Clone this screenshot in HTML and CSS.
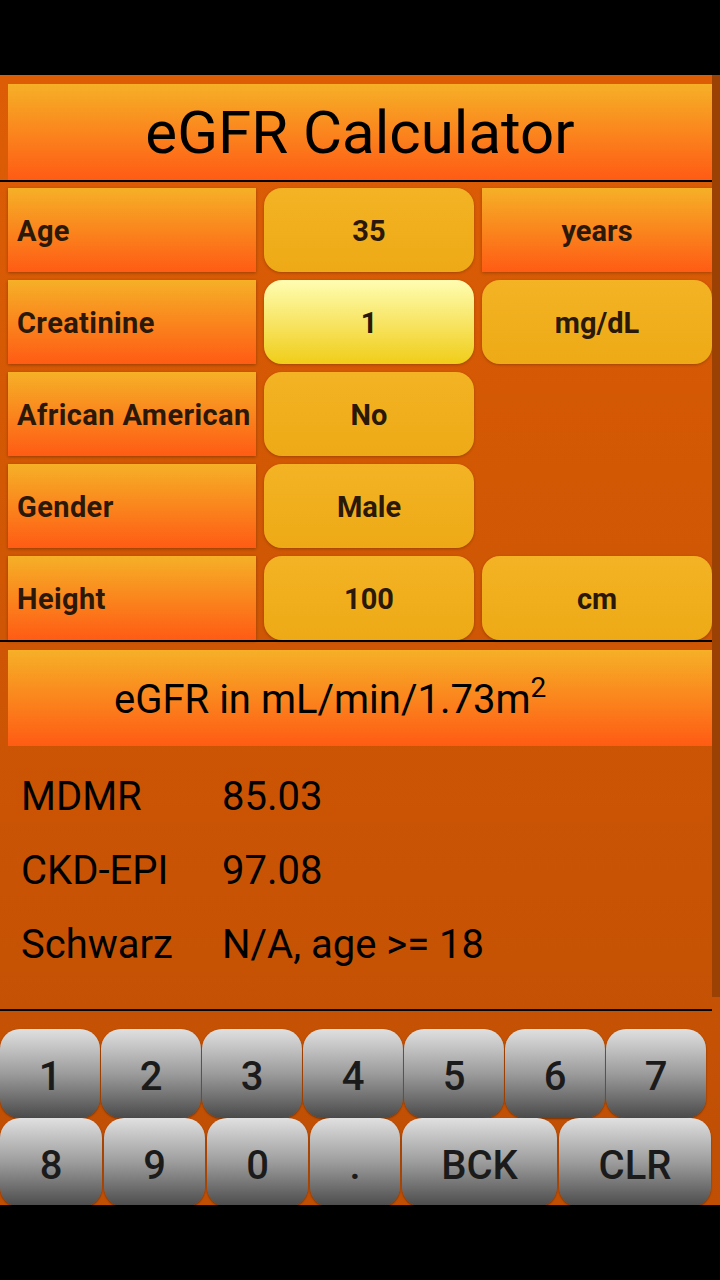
FILE: index.html
```html
<!DOCTYPE html>
<html lang="en">
<head>
  <meta charset="UTF-8" />
  <title>eGFR Calculator</title>
  <link rel="stylesheet" href="styles.css">
</head>
<body>

<div class="status-bar"></div>

<div class="app">
  <div class="scrollbar"></div>

  <div class="title">eGFR Calculator</div>
  <div class="divider"></div>

  <!-- inputs -->
  <div class="inputs">
    <div class="label">Age</div>
    <div class="value">35</div>
    <div class="unit flat">years</div>

    <div class="label">Creatinine</div>
    <div class="value active">1</div>
    <div class="unit">mg/dL</div>

    <div class="label">African American</div>
    <div class="value">No</div>
    <div></div>

    <div class="label">Gender</div>
    <div class="value">Male</div>
    <div></div>

    <div class="label">Height</div>
    <div class="value">100</div>
    <div class="unit">cm</div>
  </div>
  <div class="divider"></div>

  <!-- results -->
  <div class="results-head">eGFR in mL/min/1.73m<sup>2</sup></div>
  <div class="results">
    <div class="res-name">MDMR</div><div>85.03</div>
    <div class="res-name">CKD-EPI</div><div>97.08</div>
    <div class="res-name">Schwarz</div><div>N/A, age &gt;= 18</div>
  </div>
  <div class="divider low"></div>

  <!-- keypad -->
  <div class="keys row1">
    <button class="key">1</button>
    <button class="key">2</button>
    <button class="key">3</button>
    <button class="key">4</button>
    <button class="key">5</button>
    <button class="key">6</button>
    <button class="key">7</button>
  </div>
  <div class="keys row2">
    <button class="key">8</button>
    <button class="key">9</button>
    <button class="key">0</button>
    <button class="key">.</button>
    <button class="key">BCK</button>
    <button class="key">CLR</button>
  </div>
</div>

</body>
</html>
```

FILE: styles.css
```css
body {
  margin: 0;
  background: #000;
  font-family: Roboto, "Noto Sans", sans-serif;
  width: 720px;
  height: 1280px;
  overflow: hidden;
}
.status-bar {
  height: 75px;
}
.app {
  position: relative;
  height: 1130px;
  padding-top: 9px;
  box-sizing: border-box;
  background: linear-gradient(#dd5d05, #c04f04);
  overflow: hidden;
}
.scrollbar {
  position: absolute;
  top: 0;
  right: 0;
  width: 8px;
  height: 922px;
  background: #9a4103;
}
.title {
  margin: 0 8px;
  height: 96px;
  line-height: 98px;
  text-align: center;
  font-size: 60px;
  color: #000;
  background: linear-gradient(#f6b027, #ff5b14);
}
.divider {
  width: 712px;
  height: 2px;
  background: #000;
}
.divider.low {
  margin-top: 28px;
}
.inputs {
  display: grid;
  grid-template-columns: 248px 210px 230px;
  grid-auto-rows: 84px;
  gap: 8px;
  padding: 6px 8px 0 8px;
}
.label, .value, .unit {
  display: flex;
  align-items: center;
  padding-top: 2px;
  font-size: 29px;
  font-weight: bold;
  color: #2a1808;
}
.label {
  padding-left: 9px;
  background: linear-gradient(#f6b027, #ff5b14);
  box-shadow: 0 1px 3px rgba(0, 0, 0, 0.3);
  white-space: nowrap;
  letter-spacing: 0.4px;
}
.value, .unit {
  justify-content: center;
  border-radius: 18px;
  background: linear-gradient(#f3b324, #eeaa16);
  box-shadow: 0 1px 3px rgba(0, 0, 0, 0.25);
}
.value.active {
  background: linear-gradient(#fffdb2, #f0cd18);
}
.unit.flat {
  border-radius: 0;
  background: linear-gradient(#f6b027, #ff5b14);
}
.results-head {
  margin: 8px 8px 0 8px;
  height: 96px;
  line-height: 100px;
  padding-left: 106px;
  font-size: 40px;
  color: #000;
  background: linear-gradient(#f6b027, #ff5b14);
}
.results-head sup {
  font-size: 28px;
  line-height: 0;
  vertical-align: 16px;
}
.results {
  display: grid;
  grid-template-columns: 201px auto;
  grid-auto-rows: 74px;
  align-items: center;
  padding: 13px 0 0 21px;
  font-size: 40px;
  color: #000;
}
.keys {
  display: flex;
}
.row1 {
  margin-top: 18px;
  gap: 1px;
}
.row1 .key {
  width: 100px;
  height: 89px;
}
.row2 {
  gap: 2px;
}
.row2 .key {
  width: 101px;
  height: 89px;
}
.row2 .key:nth-child(1) { width: 102px; }
.row2 .key:nth-child(4) { width: 90px; }
.row2 .key:nth-child(5) { width: 155px; }
.row2 .key:nth-child(6) { width: 152px; }
.key {
  border: none;
  padding: 6px 0 0 0;
  border-radius: 20px;
  background: linear-gradient(#e0e0e0, #9c9c9c 50%, #4a4a4a);
  font-family: Roboto, "Noto Sans", sans-serif;
  font-size: 40px;
  font-weight: 500;
  color: #1b1b1b;
  box-shadow: 0 1px 2px rgba(0, 0, 0, 0.4);
}
```
